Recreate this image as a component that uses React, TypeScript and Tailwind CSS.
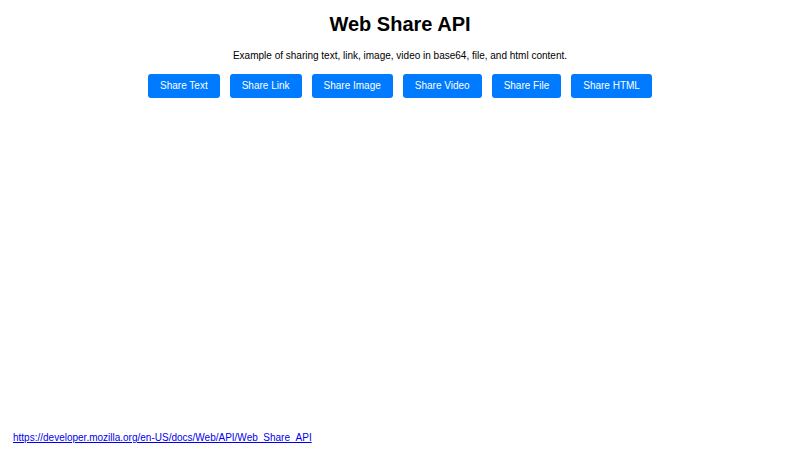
const buttons = ['Share Text', 'Share Link', 'Share Image', 'Share Video', 'Share File', 'Share HTML'];

export default function App() {
  return (
    <div className="flex h-[450px] flex-col bg-white font-['Liberation_Sans',Arial,sans-serif] text-black">
      <main className="flex flex-1 flex-col items-center pt-[12px]">
        <h1 className="text-[20px] font-bold leading-[24px]">Web Share API</h1>
        <p className="mt-[14px] text-[10px] leading-[12px]">
          Example of sharing text, link, image, video in base64, file, and html content.
        </p>
        <div className="mt-[12px] flex gap-[10px]">
          {buttons.map(b => (
            <button
              key={b}
              className="h-[24px] rounded-[3px] bg-[#007bff] px-[12px] text-[10px] leading-[12px] text-white"
            >
              {b}
            </button>
          ))}
        </div>
      </main>
      <footer className="px-[13px] pb-[6px] text-[10px] leading-[12px]">
        <a
          href="https://developer.mozilla.org/en-US/docs/Web/API/Web_Share_API"
          className="text-[#0000ee] underline"
        >
          https://developer.mozilla.org/en-US/docs/Web/API/Web_Share_API
        </a>
      </footer>
    </div>
  );
}
